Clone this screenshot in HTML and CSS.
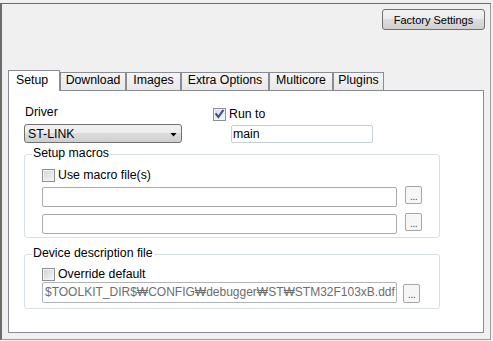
FILE: index.html
```html
<!DOCTYPE html>
<html>
<head>
<meta charset="utf-8">
<title>Debugger Options</title>
<link rel="stylesheet" href="styles.css">
</head>
<body>
<div class="frame">
  <div class="toolbar">
    <button class="btn">Factory Settings</button>
  </div>
  <div class="tabs">
    <div class="tab active t-setup">Setup</div>
    <div class="tab t-download">Download</div>
    <div class="tab t-images">Images</div>
    <div class="tab t-extra">Extra Options</div>
    <div class="tab t-multi">Multicore</div>
    <div class="tab t-plugins">Plugins</div>
  </div>
  <div class="panel">
    <div class="row1">
      <div class="driver">
        <div class="label-text">Driver</div>
        <div class="select"><span>ST-LINK</span><span class="arrow"></span></div>
      </div>
      <div class="run">
        <div class="check-row">
          <span class="cb checked"><svg width="11" height="11" viewBox="0 0 11 11"><path d="M2.2 5.2 L4.4 8 L8.8 1.8" fill="none" stroke="#3f5290" stroke-width="2.1" stroke-linecap="square"/></svg></span>
          <span>Run to</span>
        </div>
        <div class="run-input">main</div>
      </div>
    </div>
    <fieldset class="group macros">
      <legend>Setup macros</legend>
      <div class="check-row inset"><span class="cb"></span><span>Use macro file(s)</span></div>
      <div class="file-row first"><div class="file-input"></div><div class="dots">...</div></div>
      <div class="file-row second"><div class="file-input"></div><div class="dots">...</div></div>
    </fieldset>
    <fieldset class="group device">
      <legend>Device description file</legend>
      <div class="check-row inset"><span class="cb"></span><span>Override default</span></div>
      <div class="file-row dev"><div class="file-input disabled">$TOOLKIT_DIR$₩CONFIG₩debugger₩ST₩STM32F103xB.ddf</div><div class="dots">...</div></div>
    </fieldset>
  </div>
</div>
</body>
</html>
```
FILE: styles.css
```css
html, body {
  margin: 0;
  padding: 0;
}
body {
  background: #f0f0f0;
  font-family: "Liberation Sans", "DejaVu Sans", "Noto Sans CJK KR", sans-serif;
  font-size: 12.3px;
  color: #000;
  width: 493px;
  height: 341px;
  overflow: hidden;
}
.frame {
  margin-top: 3px;
  width: 491px;
  height: 337px;
  box-sizing: border-box;
  border-top: 1px solid #6b6b6b;
  border-left: 2px solid #6b6b6b;
  border-right: 1px solid #9c9c9c;
  border-bottom: 1px solid #9c9c9c;
  padding: 0 6px 6px 6px;
  display: flex;
  flex-direction: column;
}
.toolbar {
  display: flex;
  justify-content: flex-end;
  margin-top: 5px;
  margin-right: -1px;
}
.btn {
  width: 103px;
  height: 21px;
  box-sizing: border-box;
  border: 1px solid #707070;
  border-radius: 3px;
  background: linear-gradient(#f2f2f2 0%, #ebebeb 50%, #dddddd 50%, #cfcfcf 100%);
  font-family: "Liberation Sans", sans-serif;
  font-size: 11px;
  color: #000;
  padding: 0;
  margin: 0;
}
.tabs {
  display: flex;
  align-items: flex-end;
  margin-top: 40px;
}
.tab {
  box-sizing: border-box;
  height: 18px;
  border: 1px solid #898c95;
  border-bottom: none;
  background: linear-gradient(#f4f4f4, #e8e8e8);
  line-height: 14px;
  text-align: center;
  white-space: nowrap;
}
.tab.active {
  height: 21px;
  margin-bottom: -1px;
  padding-top: 2px;
  background: #fff;
  position: relative;
  z-index: 1;
}
.t-setup { width: 52px; text-align: left; padding-left: 7px; }
.t-download { width: 66px; }
.t-images { width: 55px; }
.t-extra { width: 88px; }
.t-multi { width: 64px; }
.t-plugins { width: 51px; }

.panel {
  height: 243px;
  box-sizing: border-box;
  border: 1px solid #898c95;
  background: #fff;
  padding: 14px 0 0 15px;
}
.row1 {
  display: flex;
  align-items: flex-start;
}
.driver {
  width: 158px;
}
.label-text {
  line-height: 14px;
  padding-left: 1px;
}
.select {
  margin-top: 5px;
  height: 19px;
  box-sizing: border-box;
  border: 1px solid #707070;
  border-radius: 3px;
  background: linear-gradient(#f2f2f2 0%, #ebebeb 50%, #dddddd 50%, #cfcfcf 100%);
  display: flex;
  align-items: center;
  justify-content: space-between;
  padding: 0 4px 0 3px;
  line-height: 14px;
}
.arrow {
  width: 7px;
  height: 4px;
  margin-top: 2px;
  background: #000;
  clip-path: polygon(0 0, 100% 0, 50% 100%);
}
.run {
  margin-left: 31px;
  margin-top: 2px;
}
.check-row {
  display: flex;
  align-items: center;
  height: 15px;
  gap: 3px;
  line-height: 15px;
}
.cb {
  width: 13px;
  height: 13px;
  box-sizing: border-box;
  border: 1px solid #8e8f8f;
  background: linear-gradient(135deg, #cfd2d6 0%, #f7f7f7 100%);
  box-shadow: inset 0 0 0 1px #f4f4f4;
  display: flex;
  align-items: center;
  justify-content: center;
  flex: none;
}
.cb.checked {
  background: linear-gradient(135deg, #d8dbe0 0%, #f8f8f8 100%);
}
.cb svg {
  display: block;
}
.run-input {
  margin-left: 18px;
  margin-top: 3px;
  width: 142px;
  height: 18px;
  box-sizing: border-box;
  border: 1px solid #c6ced8;
  border-radius: 2px;
  padding-left: 1px;
  line-height: 16px;
}
.group {
  width: 416px;
  box-sizing: border-box;
  border: 1px solid #d5dfe5;
  border-radius: 3px;
  margin: 2px 0 0 0;
  min-width: 0;
}
.group legend {
  padding: 1px 1px 3px;
  margin-left: -1px;
  line-height: 14px;
}
.macros {
  padding: 5px 0 3px 8px;
}
.device {
  margin-top: 7px;
  padding: 4px 0 5px 8px;
}
.inset {
  margin-left: 9px;
}
.file-row {
  display: flex;
  align-items: flex-start;
  margin-left: 9px;
}
.file-row.first { margin-top: 4px; }
.file-row.second { margin-top: 7px; }
.file-input {
  width: 355px;
  height: 20px;
  box-sizing: border-box;
  border: 1px solid #a9a9a9;
  border-radius: 2px;
  background: #fff;
}
.dots {
  width: 17px;
  height: 18px;
  box-sizing: border-box;
  margin-left: 8px;
  margin-top: -1px;
  border: 1px solid #a6a6a6;
  border-radius: 2px;
  background: #f6f6f6;
  color: #555;
  font-size: 11px;
  line-height: 18px;
  text-align: center;
  letter-spacing: -0.5px;
}
.file-row.dev .file-input {
  height: 21px;
  border-color: #b0b5b9;
  color: #6d6d6d;
  padding-left: 2px;
  line-height: 18px;
  white-space: nowrap;
  overflow: hidden;
  font-size: 12px;
}
.file-row.dev .dots {
  margin-left: 6px;
  margin-top: 2px;
  height: 19px;
}
```
